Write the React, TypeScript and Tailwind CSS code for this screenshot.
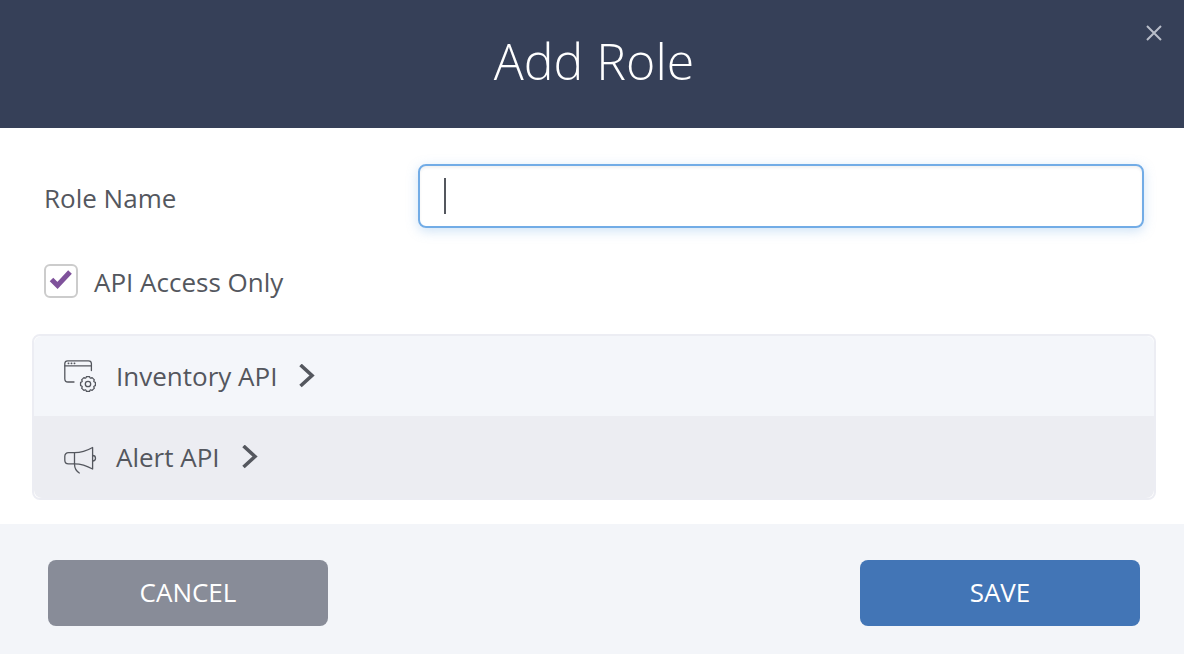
import { useState } from 'react';
import type { ReactNode } from 'react';

const WindowGearIcon = () => (
  <svg width="32" height="32" viewBox="0 0 32 32" fill="none" stroke="#54575e" strokeWidth="1.3" strokeLinecap="round" strokeLinejoin="round" aria-hidden="true">
    <path d="M10 22H4A3.300 3.300 0 0 1 .8 18.700V3.600A2.900 2.900 0 0 1 3.700 .8H24.500A2.900 2.900 0 0 1 27.400 3.600V10.500" />
    <path d="M.8 5.800H27.400" />
    <path d="M4.400 3.300H4.600M7.400 3.300H7.600M10.400 3.300H10.600" strokeWidth="1.700" />
    <path
      transform="translate(24 24)"
      d="M7.430-1.580V1.580Q4.800 1.990 6.370 4.140L4.140 6.370Q1.990 4.800 1.580 7.430H-1.580Q-1.990 4.800-4.140 6.370L-6.370 4.140Q-4.800 1.990-7.430 1.580V-1.580Q-4.800-1.990-6.370-4.140L-4.140-6.370Q-1.990-4.800-1.580-7.430H1.580Q1.990-4.800 4.140-6.370L6.370-4.140Q4.800-1.990 7.430-1.580Z"
    />
    <circle cx="24" cy="24" r="2.700" />
  </svg>
);

const MegaphoneIcon = () => (
  <svg width="32" height="32" viewBox="0 0 32 32" fill="none" stroke="#54575e" strokeWidth="1.300" strokeLinecap="round" strokeLinejoin="round" className="overflow-visible" aria-hidden="true">
    <path d="M10.500 11.700H4.500C2.200 11.700 .8 13.200 .8 15.200V19.200C.8 21.400 2.200 22.800 4.500 22.800H10.500z" />
    <path d="M10.500 11.700C17 11.700 23 9.700 28.600 6.500V28C23 24.800 17 22.800 10.500 22.800" />
    <path d="M28.600 14.500C30.500 14.500 31.500 15.700 31.500 17.200S30.500 20 28.600 20" />
    <path d="M10.500 22.800C10.500 27.500 12.500 30.300 15.300 32" />
  </svg>
);

const Chevron = ({ open }: { open: boolean }) => (
  <svg width="16" height="24" viewBox="0 0 16 24" className={open ? 'rotate-90' : ''} fill="none" stroke="#54575e" strokeWidth="3.600" aria-hidden="true">
    <path d="M1.500 1L13 11.500L1.500 22" />
  </svg>
);

interface PermissionRowProps {
  label: string;
  icon: ReactNode;
  className: string;
}

function PermissionRow({ label, icon, className }: PermissionRowProps) {
  const [open, setOpen] = useState(false);

  return (
    <button
      type="button"
      aria-expanded={open}
      onClick={() => setOpen(!open)}
      className={`flex w-full items-center px-[30px] text-left ${className}`}
    >
      {icon}
      <span className="mr-[22px] ml-5">{label}</span>
      <Chevron open={open} />
    </button>
  );
}

export default function App() {
  const [name, setName] = useState('');
  const [apiOnly, setApiOnly] = useState(true);

  return (
    <form
      onSubmit={(e) => e.preventDefault()}
      className="flex min-h-screen flex-col bg-white font-['Open_Sans',sans-serif] text-[26px] leading-9 text-[#54575e]"
    >
      {/* Header */}
      <header className="relative flex h-32 items-center justify-center bg-[#364058] pb-1.5 pl-1">
        <h1 className="text-[50px] leading-[72px] font-light text-white">Add Role</h1>
        <button type="button" aria-label="Close" className="absolute top-[25px] right-[22px] text-[#b9bec9]">
          <svg width="16" height="16" viewBox="0 0 16 16" fill="none" stroke="currentColor" strokeWidth="2">
            <path d="M1 1L15 15M15 1L1 15" />
          </svg>
        </button>
      </header>

      <main className="flex grow flex-col pt-9 pr-7 pb-6 pl-8">
        <div className="flex h-16 items-center px-3">
          <label htmlFor="role-name" className="w-[374px] shrink-0 pt-1">Role Name</label>
          <div className="relative grow">
            <input
              id="role-name"
              type="text"
              autoFocus
              value={name}
              onChange={(e) => setName(e.target.value)}
              className="peer block h-16 w-full rounded-lg border-2 border-[#72ace6] px-6 caret-transparent shadow-[0_3px_12px_rgba(114,172,230,0.35),inset_0_2px_3px_rgba(0,0,0,0.06)] outline-none focus:not-placeholder-shown:caret-[#54575e]"
              placeholder=" "
            />
            {/* thick caret while the field is empty */}
            <span className="pointer-events-none absolute top-[14px] left-[26px] hidden h-9 w-[2px] bg-[#54575e] peer-placeholder-shown:block" />
          </div>
        </div>

        <label className="mt-9 flex h-[34px] items-center gap-4 pl-3">
          <span className="relative h-[34px] w-[34px]">
            <input
              type="checkbox"
              checked={apiOnly}
              onChange={(e) => setApiOnly(e.target.checked)}
              className="peer block h-[34px] w-[34px] appearance-none rounded-md border-2 border-[#cccccc] bg-white"
            />
            <svg className="pointer-events-none absolute inset-0 hidden peer-checked:block" width="34" height="34" viewBox="0 0 34 34" fill="none" stroke="#7f529b" strokeWidth="5" aria-hidden="true">
              <path d="M7.500 15.500L13.500 21.500L26 8" />
            </svg>
          </span>
          <span className="pt-0.5">API Access Only</span>
        </label>

        <div className="mt-9 rounded-lg border-2 border-[#ecedf3] bg-white">
          <PermissionRow label="Inventory API" icon={<WindowGearIcon />} className="h-20 rounded-t-lg bg-[#f4f6fa]" />
          <PermissionRow label="Alert API" icon={<MegaphoneIcon />} className="h-[82px] rounded-b-lg bg-[#ecedf2]" />
        </div>
      </main>

      <footer className="flex justify-between bg-[#f3f5f9] pt-9 pr-11 pb-7 pl-12 text-white">
        <button type="button" className="h-[66px] w-[280px] rounded-lg bg-[#888c98] pb-0.5 font-medium">CANCEL</button>
        <button type="submit" className="h-[66px] w-[280px] rounded-lg bg-[#4275b6] pb-0.5 font-medium">SAVE</button>
      </footer>
    </form>
  );
}
